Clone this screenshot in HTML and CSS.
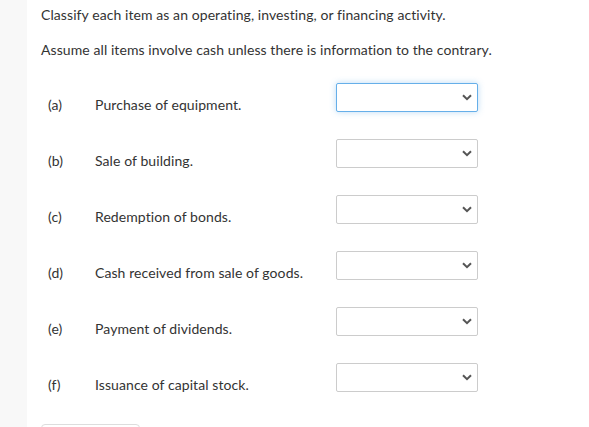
FILE: index.html
```html
<!DOCTYPE html>
<html>
<head>
<meta charset="utf-8">
<link rel="stylesheet" href="styles.css">
</head>
<body>
<div class="page">
  <aside class="rail"></aside>
  <main class="content">
    <p class="intro">Classify each item as an operating, investing, or financing activity.</p>
    <p class="intro second">Assume all items involve cash unless there is information to the contrary.</p>
    <div class="items">
      <div class="row"><span class="tag">(a)</span><span class="desc">Purchase of equipment.</span><div class="select focused"><svg class="chev" viewBox="0 0 10 7" width="10" height="7"><path d="M1 1.2 L5 5.2 L9 1.2" fill="none" stroke="#555" stroke-width="2"/></svg></div></div>
      <div class="row"><span class="tag">(b)</span><span class="desc">Sale of building.</span><div class="select"><svg class="chev" viewBox="0 0 10 7" width="10" height="7"><path d="M1 1.2 L5 5.2 L9 1.2" fill="none" stroke="#555" stroke-width="2"/></svg></div></div>
      <div class="row"><span class="tag">(c)</span><span class="desc">Redemption of bonds.</span><div class="select"><svg class="chev" viewBox="0 0 10 7" width="10" height="7"><path d="M1 1.2 L5 5.2 L9 1.2" fill="none" stroke="#555" stroke-width="2"/></svg></div></div>
      <div class="row"><span class="tag">(d)</span><span class="desc">Cash received from sale of goods.</span><div class="select"><svg class="chev" viewBox="0 0 10 7" width="10" height="7"><path d="M1 1.2 L5 5.2 L9 1.2" fill="none" stroke="#555" stroke-width="2"/></svg></div></div>
      <div class="row"><span class="tag">(e)</span><span class="desc">Payment of dividends.</span><div class="select"><svg class="chev" viewBox="0 0 10 7" width="10" height="7"><path d="M1 1.2 L5 5.2 L9 1.2" fill="none" stroke="#555" stroke-width="2"/></svg></div></div>
      <div class="row"><span class="tag">(f)</span><span class="desc">Issuance of capital stock.</span><div class="select"><svg class="chev" viewBox="0 0 10 7" width="10" height="7"><path d="M1 1.2 L5 5.2 L9 1.2" fill="none" stroke="#555" stroke-width="2"/></svg></div></div>
    </div>
    <div class="button-edge"></div>
  </main>
</div>
</body>
</html>
```

FILE: styles.css
```css
html, body {
  margin: 0;
  padding: 0;
  background: #fff;
}
body {
  font-family: Lato, "Open Sans", sans-serif;
  font-size: 14px;
  letter-spacing: 0.08px;
  color: #333;
}
.page {
  display: flex;
  height: 427px;
  overflow: hidden;
}
.rail {
  width: 27px;
  flex: none;
  background: #f8f8f8;
}
.content {
  flex: 1;
  padding-left: 14px;
}
.intro {
  margin: 0;
  line-height: 17px;
  padding-top: 6px;
}
.intro.second {
  padding-top: 18px;
}
.items {
  padding-top: 25px;
  display: flex;
  flex-direction: column;
  gap: 27px;
}
.row {
  display: grid;
  grid-template-columns: 47px 241px 142px;
  align-items: start;
  padding-left: 7px;
  height: 29px;
}
.tag, .desc {
  margin-top: 13px;
  line-height: 17px;
}
.select {
  box-sizing: border-box;
  width: 142px;
  height: 29px;
  border: 1px solid #ccc;
  border-radius: 2px;
  background: #fff;
  display: flex;
  align-items: center;
  justify-content: flex-end;
  padding-right: 5px;
}
.select.focused {
  border-color: #66afe9;
  box-shadow: 0 0 6px rgba(102, 175, 233, 0.45);
}
.chev {
  display: block;
}
.button-edge {
  margin-top: 32px;
  width: 99px;
  height: 20px;
  border: 1px solid #ddd;
  border-radius: 4px;
  box-sizing: border-box;
}
```
